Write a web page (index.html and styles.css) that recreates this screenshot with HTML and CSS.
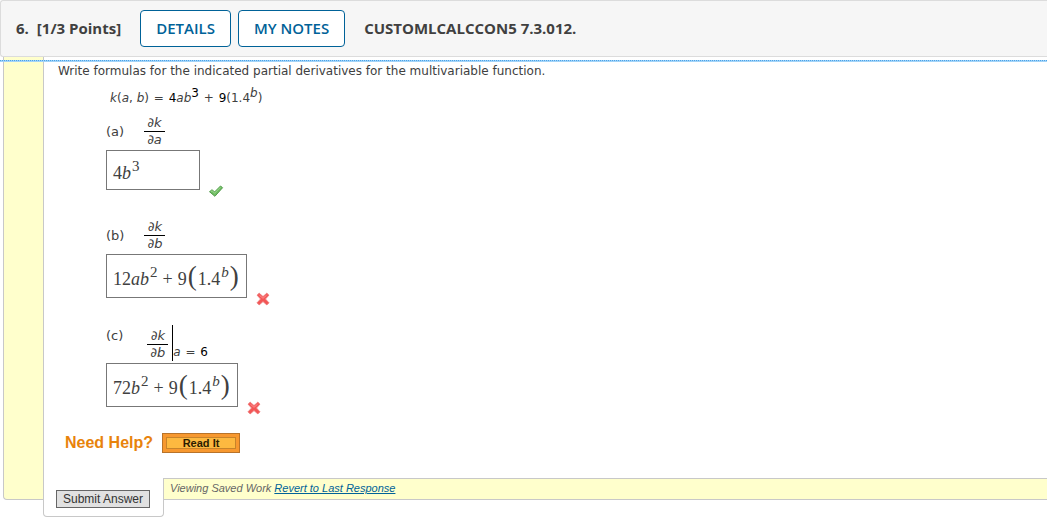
FILE: index.html
```html
<!DOCTYPE html>
<html lang="en">
<head>
  <meta charset="UTF-8" />
  <meta name="viewport" content="width=device-width, initial-scale=1.0"/>
  <title>Question 6</title>
  <link rel="stylesheet" href="styles.css">
</head>
<body>
  <header class="question-header">
    <h2 class="number"><span>6.</span> <span>[1/3 Points]</span></h2>
    <div class="header-buttons">
      <button type="button" class="header-button">DETAILS</button>
      <button type="button" class="header-button">MY NOTES</button>
    </div>
    <span class="code">CUSTOMLCALCCON5 7.3.012.</span>
  </header>

  <form class="question">
    <div class="gutter"></div>
    <main class="main">
      <div class="content">
        <p class="prompt">Write formulas for the indicated partial derivatives for the multivariable function.</p>

        <div class="parts">
          <p class="formula"><i>k</i>(<i>a</i>, <i>b</i>) <span class="operator">=</span> <b>4</b><i>ab</i><sup><b>3</b></sup> <span class="operator">+</span> <b>9</b>(1.4<sup><i>b</i></sup>)</p>

          <section class="part">
            <div class="label">
              <span class="letter">(a)</span>
              <span class="fraction"><i>∂k</i><i>∂a</i></span>
            </div>
            <div class="response">
              <div class="answer answer-short" role="textbox" aria-label="Answer (a)">4<i>b</i><sup>3</sup></div>
              <svg class="mark" width="16" height="16" viewBox="0 0 16 16" role="img" aria-label="Correct">
                <path d="M1.5 8.7 L4.2 6.7 L6.5 9 L12.5 3 L14.6 4.7 L6.9 13.3 Z" fill="#6fbd62" stroke="#529c4b" stroke-linejoin="round"/>
                <path d="M3 8.6 L4.2 7.8 L6.5 10.2 L12.6 4.2" fill="none" stroke="#9bd78d"/>
              </svg>
            </div>
          </section>

          <section class="part part-b">
            <div class="label">
              <span class="letter">(b)</span>
              <span class="fraction"><i>∂k</i><i>∂b</i></span>
            </div>
            <div class="response">
              <div class="answer" role="textbox" aria-label="Answer (b)">12<i>ab</i><sup>2</sup><span class="plus">+</span>9<span class="paren">(</span>1.4<sup><i>b</i></sup><span class="paren">)</span></div>
              <svg class="mark" width="16" height="16" viewBox="0 0 16 16" role="img" aria-label="Incorrect">
                <path d="M4.2 2.2 L8 5.6 L11.8 2.2 L13.9 4.2 L10.4 8 L13.9 11.8 L11.8 13.9 L8 10.5 L4.2 13.9 L2.1 11.8 L5.6 8 L2.1 4.2 Z" fill="#f35656" stroke="#ef7777" stroke-linejoin="round"/>
                <path d="M4.4 4.2 L8 7.3 L11.6 4.2" fill="none" stroke="#ff8c8c"/>
              </svg>
            </div>
          </section>

          <section class="part part-c">
            <div class="label">
              <span class="letter">(c)</span>
              <span class="fraction"><i>∂k</i><i>∂b</i></span>
              <span class="evaluated"><i>a</i> <span class="operator">=</span> <b>6</b></span>
            </div>
            <div class="response">
              <div class="answer" role="textbox" aria-label="Answer (c)">72<i>b</i><sup>2</sup><span class="plus">+</span>9<span class="paren">(</span>1.4<sup><i>b</i></sup><span class="paren">)</span></div>
              <svg class="mark" width="16" height="16" viewBox="0 0 16 16" role="img" aria-label="Incorrect">
                <path d="M4.2 2.2 L8 5.6 L11.8 2.2 L13.9 4.2 L10.4 8 L13.9 11.8 L11.8 13.9 L8 10.5 L4.2 13.9 L2.1 11.8 L5.6 8 L2.1 4.2 Z" fill="#f35656" stroke="#ef7777" stroke-linejoin="round"/>
                <path d="M4.4 4.2 L8 7.3 L11.6 4.2" fill="none" stroke="#ff8c8c"/>
              </svg>
            </div>
          </section>
        </div>

        <div class="help">
          <span class="help-title">Need Help?</span>
          <button type="button" class="read-it">Read It</button>
        </div>
      </div>

      <div class="footer">
        <div class="submit-panel">
          <button type="submit" class="submit">Submit Answer</button>
        </div>
        <div class="saved">Viewing Saved Work <a href="#">Revert to Last Response</a></div>
      </div>
    </main>
  </form>
</body>
</html>
```
FILE: styles.css
```css
* { box-sizing: border-box; }

body {
  margin: 0;
  font-family: "DejaVu Sans", sans-serif;
  font-size: 12px;
  color: #404040;
  background: white;
}

p { margin: 0; }

.question-header {
  display: flex;
  align-items: center;
  height: 57px;
  padding: 0 0 1px 15px;
  background: #f6f6f6;
  border: 1px solid #dcdcdc;
  border-right: none;
  border-radius: 3px 0 0 3px;
  font-family: "Open Sans", sans-serif;
  font-size: 15px;
  font-weight: 700;
}

.number {
  display: flex;
  gap: 8px;
  margin: 0;
  font-size: 15px;
}

.header-buttons {
  display: flex;
  gap: 7px;
  margin: 0 19px;
}

.header-button {
  height: 37px;
  padding: 0 15px 1px;
  background: white;
  border: 1px solid #006298;
  border-radius: 4px;
  color: #006298;
  font-family: inherit;
  font-size: 15px;
  font-weight: 600;
  cursor: pointer;
}

.question {
  position: relative;
  display: flex;
  padding-left: 3px;
}

/* dotted rule across the top of the question */
.question::before {
  content: "";
  position: absolute;
  top: 3px;
  left: 0;
  right: 0;
  height: 1px;
  background: #a4d4f8;
  border-top: 1px dotted #4aa3e8;
}

.gutter {
  width: 40px;
  margin-bottom: 17px;
  background: #ffffcc;
  border: 1px solid #c8c8c8;
  border-width: 0 0 1px 1px;
  border-radius: 0 0 0 4px;
}

.main { flex: 1; }

.content {
  height: 421px;
  padding: 6px 0 0 14px;
  border-left: 1px solid #c8c8c8;
}

.prompt { line-height: 16px; }

.parts { padding-left: 48px; }

.formula {
  padding: 9px 0 0 4px;
  line-height: 20px;
}

.formula b,
.evaluated b {
  color: black;
  font-weight: 400;
}

.formula sup {
  font-size: 12px;
  line-height: 0;
}

.operator { margin: 0 1px; }

.part { padding-top: 6px; }

.part-b { padding-top: 28px; }

.part-c { padding-top: 29px; }

.label {
  display: flex;
  align-items: center;
  height: 36px;
  gap: 20px;
  padding-bottom: 2px;
}

.letter { font-size: 13px; }

.part-c .letter {
  align-self: flex-start;
  padding: 1px 4px 0 0;
}

.fraction {
  display: flex;
  flex-direction: column;
  text-align: center;
  font-size: 13px;
  line-height: 16px;
}

.fraction i { padding: 0 3px; }

.fraction i + i { border-top: 1px solid black; }

.evaluated {
  align-self: flex-end;
  height: 36px;
  margin-left: -16px;
  padding-top: 19px;
  border-left: 1px solid black;
  line-height: 16px;
}

.response {
  display: flex;
  align-items: flex-end;
  gap: 8px;
}

.answer {
  height: 44px;
  padding: 0 6px;
  border: 1px solid #777;
  font-family: "Liberation Serif", serif;
  font-size: 18px;
  line-height: 48px;
  white-space: nowrap;
}

.answer-short {
  width: 94px;
  height: 40px;
  line-height: 44px;
}

.answer sup {
  margin-left: 1px;
  font-size: 15px;
  line-height: 0;
  vertical-align: 8px;
}

.plus { margin: 0 5px; }

.paren {
  margin: 0 1px;
  font-size: 27px;
  line-height: 0;
}

.mark { margin-bottom: -9px; }

.help {
  display: flex;
  align-items: center;
  gap: 9px;
  padding: 26px 0 0 7px;
}

.help-title {
  color: #e8830c;
  font-family: "Liberation Sans", sans-serif;
  font-size: 16px;
  font-weight: 700;
}

.read-it {
  width: 78px;
  height: 20px;
  padding: 0;
  background: #fdb940;
  border: 1px solid #b8732a;
  box-shadow: inset 0 0 0 3px #f7982f, inset 0 0 0 4px #c8842a;
  color: #2b1c00;
  font-family: "Liberation Sans", sans-serif;
  font-size: 11px;
  font-weight: 700;
  cursor: pointer;
}

.footer {
  display: flex;
  align-items: flex-start;
  font-family: "Liberation Sans", sans-serif;
}

.submit-panel {
  height: 39px;
  padding: 12px 13px 0 12px;
  border: 1px solid #c8c8c8;
  border-top: none;
  border-radius: 0 0 4px 4px;
}

.submit {
  width: 94px;
  height: 18px;
  padding: 0;
  background: #e1e1e1;
  border: 1px solid #666;
  color: #333;
  font-family: inherit;
  font-size: 12px;
  white-space: nowrap;
  cursor: pointer;
}

.saved {
  flex: 1;
  height: 22px;
  padding-left: 6px;
  background: #ffffcc;
  border: 1px solid #c8c8c8;
  border-width: 1px 0;
  color: #666;
  font-size: 11px;
  font-style: italic;
  line-height: 18px;
}

.saved a { color: #006298; }
```
